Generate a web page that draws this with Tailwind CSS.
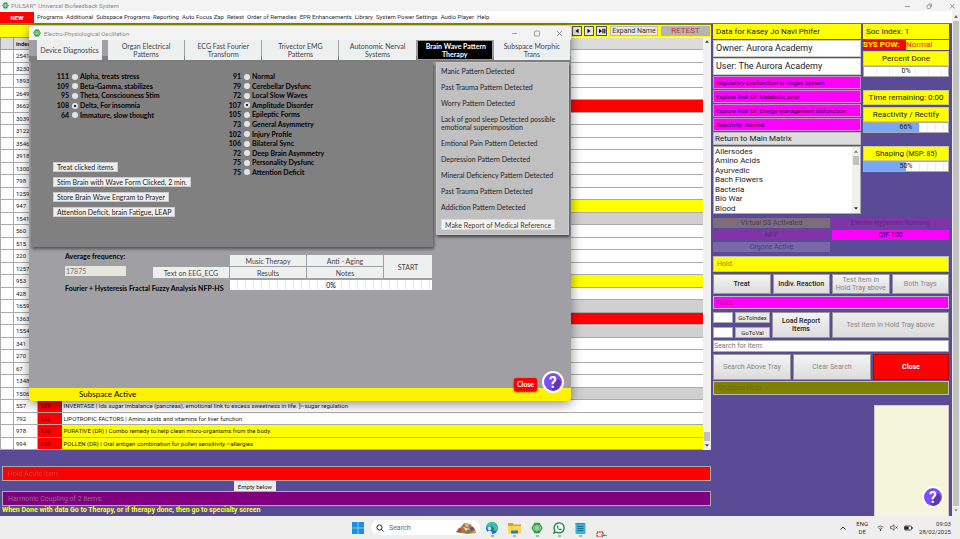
<!DOCTYPE html>
<html lang="en">
<head>
<meta charset="utf-8">
<title>PULSAR™ Universal Biofeedback System</title>
<script src="https://cdn.jsdelivr.net/npm/@tailwindcss/browser@4"></script>
</head>
<body class="min-h-screen flex flex-col bg-[#f3f3f3] font-['Roboto',sans-serif] text-[7px] leading-[9px] text-[#222] overflow-hidden">

<svg class="hidden">
  <symbol id="hex" viewBox="0 0 16 16"><path d="M4.5 1h7L15.5 8l-4 7h-7L.5 8z" fill="#2f9e44"/><path d="M5.2 4.5c-2 1-2 6 0 7M10.8 4.5c2 1 2 6 0 7M8 3.5v9M6.5 5v6M9.500 5v6" stroke="#d9f5df" stroke-width="1.100" fill="none"/></symbol>
  <symbol id="help" viewBox="0 0 24 24"><circle cx="12" cy="12" r="12" fill="#fff"/><circle cx="12" cy="12" r="9.800" fill="#7c4dff"/><path d="M16 7l4.500 4.500a9.800 9.800 0 0 1-8.500 10.300L9 18z" fill="#5e35b1"/><text x="12" y="18" text-anchor="middle" font-family="Roboto" font-weight="700" font-size="17" fill="#fff">?</text></symbol>
</svg>

<header class="flex items-center h-[11px] px-[2px] gap-[2px] text-[6px] leading-[8px] text-[#8a8a8a]">
  <svg class="size-[7px]"><use href="#hex"/></svg>
  <h1 class="flex-1">PULSAR™ Universal Biofeedback System</h1>
  <svg class="w-[54px] h-[8px]" viewBox="0 0 54 8" fill="none" stroke="#888" stroke-width=".8"><path d="M1 4.500h5M46 2l4.500 4.500M50.500 2L46 6.500"/><rect x="23" y="3" width="3.500" height="3.500" rx=".8"/><path d="M24.500 2H27.500V5"/></svg>
</header>

<div class="flex flex-1 bg-[#5a4b96]">
<div class="flex-1 min-w-0 flex flex-col">
  <nav class="flex items-center h-[13px] bg-white text-[6px] leading-[8px] border-b border-[#777]">
    <a href="#" class="w-[34px] h-[11px] leading-[11px] bg-[#f00] text-white font-bold text-center">NEW</a>
    <div class="flex gap-[3px] pl-[3px] text-[#333]">
      <a href="#">Programs</a><a href="#">Additional</a><a href="#">Subspace Programs</a><a href="#">Reporting</a><a href="#">Auto Focus Zap</a><a href="#">Retest</a><a href="#">Order of Remedies</a><a href="#">EPR Enhancements</a><a href="#">Library</a><a href="#">System Power Settings</a><a href="#">Audio Player</a><a href="#">Help</a>
    </div>
  </nav>

  <div class="flex flex-1">
    <main class="flex-1 min-w-0 flex flex-col">
      <div class="flex items-center justify-end gap-[2px] h-[13px] bg-[#ff0] border-t border-[#8a8a00] pr-[1px]">
        <button aria-label="Previous" class="w-[10px] h-[10px] bg-[#e4e4e4] border border-[#555] flex items-center justify-center"><svg viewBox="0 0 8 8" class="size-[6px]"><path d="M6 1v6L2 4z"/></svg></button>
        <button aria-label="Next" class="w-[10px] h-[10px] bg-[#e4e4e4] border border-[#555] flex items-center justify-center"><svg viewBox="0 0 8 8" class="size-[6px]"><path d="M2 1v6l4-3z"/></svg></button>
        <button aria-label="Play or pause" class="w-[11px] h-[10px] bg-[#e4e4e4] border border-[#555] flex items-center justify-center"><svg viewBox="0 0 10 8" class="w-[8px] h-[6px]"><path d="M1 1v6l4-3zM5.500 1H7v6H5.500zM8 1h1.500v6H8z"/></svg></button>
        <button class="w-[48px] h-[10px] ml-[1px] bg-[#e8e8e8] border border-[#bbb] text-[7px] leading-[8px] text-[#333] whitespace-nowrap">Expand Name</button>
        <button class="w-[49px] h-[10px] ml-[1px] bg-[#b4b4b4] text-[8px] leading-[10px] text-[#c8303c]">RETEST</button>
      </div>
      <div class="flex bg-white">
        <table class="flex-1 w-full table-fixed border-collapse text-[6px] leading-[8px]">
          <colgroup><col class="w-[13px]"><col class="w-[24px]"><col class="w-[24px]"><col></colgroup>
          <thead><tr class="h-[12px] bg-[#dcdcdc] text-left">
            <th class="p-0 border border-[#999]"></th><th class="p-0 pl-[2px] border border-[#999]">index</th><th class="p-0"></th><th class="p-0"></th></tr></thead>
          <tbody id="rows"></tbody>
        </table>
        <div class="w-[8px] bg-[#f0f0f0] flex flex-col items-center justify-between py-[3px]">
          <svg viewBox="0 0 6 4" class="w-[4px] h-[3px]"><path d="M0 4h6L3 0z" fill="#444"/></svg>
          <div class="w-full flex flex-col items-center gap-[3px]"><div class="w-[6px] h-[9px] bg-[#c0c0c0]"></div><svg viewBox="0 0 6 4" class="w-[4px] h-[3px]"><path d="M0 0h6L3 4z" fill="#444"/></svg></div>
        </div>
      </div>
      <div class="pl-[2px] pt-[16px] flex flex-col">
        <input aria-label="Hold acute item" placeholder="Hold Acute Item" class="h-[15px] w-full bg-[#f00] border border-[#aaa] px-[5px] text-[7px] placeholder:text-[#9a5a4a]">
        <button class="ml-[232px] w-[42px] h-[10px] bg-[#ececec] text-[6px] leading-[9px]">Empty below</button>
        <input aria-label="Harmonic coupling" placeholder="Harmonic Coupling of 2 items:" class="h-[15px] w-full bg-[#800080] border border-[#aaa] px-[5px] text-[7px] placeholder:text-[#8f6a8f]">
        <p class="text-[7px] leading-[9px] font-bold text-[#ffff20]">When Done with data Go to Therapy, or if therapy done, then go to specialty screen</p>
      </div>
    </main>

    <aside class="w-[241px] pl-[2px] pr-[3px] flex flex-col text-[7px] leading-[9px]">
      <div class="grid grid-cols-[148px_1fr] gap-x-[2px]">
        <div class="flex flex-col">
          <p class="h-[15px] px-[3px] bg-[#ff0] text-[8px] leading-[15px]">Data for Kasey Jo Navi Phifer</p>
          <p class="h-[17px] mt-px px-[2px] bg-white border border-[#ccc] text-[9px] leading-[15px]">Owner: Aurora Academy</p>
          <p class="h-[17px] mt-px px-[2px] bg-white border border-[#ccc] text-[9px] leading-[15px]">User: The Aurora Academy</p>
          <div class="mt-px grid gap-px text-[6px] leading-[11px] text-[#400040]">
            <p class="h-[13px] px-[2px] bg-[#f0f] border border-[#c8c]">Regulatory Dysfunction in: Organ System</p>
            <p class="h-[13px] px-[2px] bg-[#f0f] border border-[#c8c]">Explore Risk Of: Metabolic error</p>
            <p class="h-[13px] px-[2px] bg-[#f0f] border border-[#c8c]">Explore Risk Of: Energy management disfunction</p>
            <p class="h-[13px] px-[2px] bg-[#f0f] border border-[#c8c]">Reactivity: Normal</p>
          </div>
          <button class="h-[13px] mt-px px-[1px] bg-[#dcdcdc] border border-[#bbb] text-left text-[8px] leading-[11px]">Return to Main Matrix</button>
          <div class="h-[68px] mt-px bg-white border border-[#aaa] flex text-[8px] overflow-hidden">
            <ul class="flex-1 pl-[1px] grid auto-rows-fr leading-[10px]"><li>Allersodes</li><li>Amino Acids</li><li>Ayurvedic</li><li>Bach Flowers</li><li>Bacteria</li><li>Bio War</li><li>Blood</li></ul>
            <div class="w-[8px] bg-[#f0f0f0] flex flex-col items-center py-[3px]"><svg viewBox="0 0 6 4" class="w-[4px] h-[3px]"><path d="M0 4h6L3 0z" fill="#777"/></svg><div class="w-[6px] h-[9px] mt-[3px] bg-[#c0c0c0]"></div><svg viewBox="0 0 6 4" class="mt-auto w-[4px] h-[3px]"><path d="M0 0h6L3 4z" fill="#333"/></svg></div>
          </div>
        </div>
        <div class="flex flex-col text-center text-[8px]">
          <p class="h-[15px] px-[3px] bg-[#ff0] text-left leading-[15px]">Soc Index: 1</p>
          <p class="h-[10px] mt-px flex text-left text-[8px] leading-[10px]"><b class="w-[43px] bg-[#f00] text-[#ff0]">SYS POW:</b><span class="flex-1 bg-[#ff0] text-[#f02020]">Normal</span></p>
          <p class="h-[15px] mt-px bg-[#ff0] border border-[#cc8] leading-[13px]">Percent Done</p>
          <div class="h-[11px] bg-white border border-[#aaa] text-[7px] leading-[9px] bg-[repeating-linear-gradient(90deg,#fff_0_12px,#eee_12px_13px)]">0%</div>
          <p class="h-[15px] mt-[13px] bg-[#ff0] border border-[#cc8] leading-[13px]">Time remaining: 0:00</p>
          <p class="h-[15px] mt-[2px] bg-[#ff0] border border-[#cc8] leading-[13px]">Reactivity / Rectify</p>
          <div class="h-[11px] bg-white border border-[#aaa] text-[7px] leading-[9px] bg-[linear-gradient(90deg,#78a8f4_0_66%,transparent_66%),repeating-linear-gradient(90deg,#fff_0_7px,#eee_7px_8px)]">66%</div>
          <p class="h-[15px] mt-[13px] bg-[#ff0] border border-[#cc8] leading-[13px]">Shaping <span class="text-[7px]">(MSP: 85)</span></p>
          <div class="h-[11px] bg-white border border-[#aaa] text-[7px] leading-[9px] bg-[linear-gradient(90deg,#78a8f4_0_50%,transparent_50%),repeating-linear-gradient(90deg,#fff_0_7px,#eee_7px_8px)]">50%</div>
        </div>
      </div>

      <div class="mt-[4px] grid grid-cols-2 gap-[2px] text-center leading-[10px]">
        <button class="h-[10px] bg-[#7c6c7c] text-[#483c60]">Virtual SS Activated</button><button class="h-[10px] bg-[#8034a8] text-[#563080]">Electro Hypnosis Running</button>
        <button class="h-[10px] bg-[#8034a8] text-[#563080]">NFP</button><button class="h-[10px] bg-[#f0f] text-[#303]">QIF 100</button>
        <button class="h-[10px] bg-[#7868a8] text-[#4a3d78]">Orgone Active</button>
      </div>

      <input aria-label="Hold" placeholder="Hold:" class="mt-[4px] h-[16px] w-full px-[3px] bg-[#ff0] border border-[#bbb] text-[7px] placeholder:text-[#88882a]">
      <div class="mt-[2px] grid grid-cols-4 gap-[2px] text-[7px] leading-[8px] *:h-[20px] *:border *:border-[#999] *:bg-linear-to-b *:from-[#f4f4f4] *:to-[#dcdcdc]">
        <button class="font-medium">Treat</button><button class="font-medium">Indiv. Reaction</button><button class="text-[#888]">Test Item in<br>Hold Tray above</button><button class="text-[#888]">Both Trays</button>
      </div>
      <input aria-label="Second hold" placeholder="Hold:" class="mt-[2px] h-[13px] w-full px-[3px] bg-[#f0f] border border-[#bbb] text-[7px] placeholder:text-[#a020a0]">
      <div class="mt-[3px] grid grid-cols-[20px_35px_58px_1fr] gap-x-[2px] gap-y-[4px]">
        <input aria-label="Index" class="h-[11px] min-w-0 bg-white border border-[#aaa]">
        <button class="h-[11px] bg-[#e8e8e8] border border-[#aaa] text-[6px] leading-[9px]">GoToIndex</button>
        <button class="row-span-2 border border-[#999] bg-linear-to-b from-[#f4f4f4] to-[#dcdcdc] font-medium leading-[8px] px-[6px]">Load Report Items</button>
        <button class="row-span-2 border border-[#999] bg-linear-to-b from-[#ececec] to-[#dcdcdc] text-[#888] leading-[8px]">Test Item in Hold Tray above</button>
        <input aria-label="Value" class="h-[11px] min-w-0 bg-white border border-[#aaa]">
        <button class="h-[11px] bg-[#e8e8e8] border border-[#aaa] text-[6px] leading-[9px]">GoToVal</button>
      </div>
      <input aria-label="Search for item" placeholder="Search for item:" class="mt-[2px] h-[12px] w-full bg-white border border-[#aaa] text-[7px] placeholder:text-[#777]">
      <div class="mt-[2px] grid grid-cols-[78px_78px_1fr] gap-[2px] *:h-[26px] *:border">
        <button class="border-[#999] bg-linear-to-b from-[#f4f4f4] to-[#dcdcdc] text-[#888]">Search Above Tray</button>
        <button class="border-[#999] bg-linear-to-b from-[#f4f4f4] to-[#dcdcdc] text-[#888]">Clear Search</button>
        <button class="border-[#b00] bg-[#f00] text-white font-bold">Close</button>
      </div>
      <input aria-label="Situation hold" placeholder="Situation Hold:" class="mt-[1px] h-[14px] w-full px-[3px] bg-[#808000] border border-[#bbb] text-[7px] placeholder:text-[#6a6a20]">
      <div class="mt-[10px] flex-1 w-[75px] ml-auto bg-[#f5f5dc] border border-b-0 border-[#ccc] flex items-end justify-end px-[4px] pb-[8px]">
        <button aria-label="Help"><svg class="size-[22px]"><use href="#help"/></svg></button>
      </div>
    </aside>
  </div>
</div>
<div class="w-[8px] bg-[#f0f0f0] flex flex-col items-center justify-between py-[4px]">
  <svg viewBox="0 0 6 4" class="w-[4px] h-[3px]"><path d="M0 4h6L3 0z" fill="#555"/></svg>
  <div class="flex-1 w-[6px] my-[3px] bg-[#c1c1c1]"></div>
  <svg viewBox="0 0 6 4" class="w-[4px] h-[3px]"><path d="M0 0h6L3 4z" fill="#999"/></svg>
</div>
</div>

<section role="dialog" aria-label="Electro-Physiological Oscillation" class="absolute left-[29px] top-[26px] w-[542px] flex flex-col rounded-[3px] overflow-hidden bg-[#a09fa4] shadow-[0_3px_12px_rgba(0,0,0,.45)] font-['Lato',sans-serif] text-black">
  <div class="h-[14px] pl-[4px] pr-[6px] flex items-center gap-[3px] bg-[#f3f3f3] text-[#8a8a8a] text-[6px] font-['Roboto',sans-serif]">
    <svg class="size-[8px]"><use href="#hex"/></svg><h2 class="flex-1">Electro-Physiological Oscillation</h2>
    <svg class="w-[54px] h-[8px]" viewBox="0 0 54 8" fill="none" stroke="#888" stroke-width=".8"><path d="M1 4.500h5M46 2l5 5M51 2l-5 5"/><rect x="23.500" y="2" width="5" height="5" rx=".5"/></svg>
  </div>
  <div class="flex h-[22px] bg-linear-to-b from-[#a09fa4] from-75% to-[#808080] to-75% pl-[8px] pr-px text-[7px] leading-[8px] text-[#444]">
    <button class="w-[65px] h-[20px] mr-[6px] bg-[#eef0f0]">Device Diagnostics</button>
    <div class="flex-1 grid grid-cols-6 gap-px *:h-[20px] *:px-[8px]">
      <button class="bg-[#eef0f0]">Organ Electrical Patterns</button><button class="bg-[#eef0f0]">ECG Fast Fourier Transform</button><button class="bg-[#eef0f0]">Trivector EMG Patterns</button><button class="bg-[#eef0f0]">Autonomic Nerval Systems</button><button class="bg-black text-white font-bold border border-[#999] whitespace-nowrap">Brain Wave Pattern<br>Therapy</button><button class="bg-[#eef0f0]">Subspace Morphic Trans</button>
    </div>
  </div>
  <div class="flex gap-[3px] items-start pl-[2px] pr-[2px]">
    <div class="flex-1 h-[185px] bg-[#808080] shadow-[1px_2px_3px_rgba(0,0,0,.5)] flex items-start pl-[22px] pt-[10px]">
      <div class="w-[172px] flex flex-col">
        <div role="radiogroup" aria-label="Brain waves" id="waves" class="h-[48px] shrink-0 grid auto-rows-fr text-[7px] leading-[9px] font-bold"></div>
        <div class="mt-[42px] flex flex-col items-start gap-[5px] text-[7px] leading-[8px] *:h-[10px] *:px-[3px] *:bg-[#eee] *:text-[#222] *:border *:border-[#ccc]">
          <button>Treat clicked items</button><button>Stim Brain with Wave Form Clicked, 2 min.</button><button>Store Brain Wave Engram to Prayer</button><button>Attention Deficit, brain Fatigue, LEAP</button>
        </div>
      </div>
      <div role="radiogroup" aria-label="Wave forms" id="forms" class="h-[105px] grid auto-rows-fr text-[7px] leading-[9px] font-bold"></div>
    </div>
    <div class="w-[133px] h-[173px] bg-[#c0c0c0] border border-[#ccc] shadow-[1px_2px_3px_rgba(0,0,0,.6)] pl-[4px] pt-[4px] text-[7px] leading-[8px] text-[#222] flex flex-col gap-[8px] items-start">
      <p>Manic Pattern Detected</p><p>Past Trauma Pattern Detected</p><p>Worry Pattern Detected</p><p>Lack of good sleep Detected possible emotional superimposition</p><p>Emtional Pain Pattern Detected</p><p>Depression Pattern Detected</p><p>Mineral Deficiency Pattern Detected</p><p>Past Trauma Pattern Detected</p><p>Addiction Pattern Detected</p>
      <button class="h-[11px] px-[3px] bg-[#f2f2f2] border border-[#ddd] text-[#444]">Make Report of Medical Reference</button>
    </div>
  </div>
  <div class="flex pl-[36px] pr-[139px] pt-[5px] pb-[96px] text-[7px] leading-[8px]">
    <div class="flex-1 min-w-0 flex flex-col">
      <label for="freq" class="font-bold h-[14px]">Average frequency:</label>
      <input id="freq" value="17875" class="w-[61px] h-[10px] px-[1px] bg-[#e6e6dc] text-[#777] text-[7px]">
      <p class="mt-[8px] font-bold whitespace-nowrap">Fourier + Hysteresis Fractal Fuzzy Analysis NFP-HS</p>
    </div>
    <button class="self-start shrink-0 w-[76px] h-[11px] mt-[15px] mr-px bg-[#eef0f0] text-[#444]">Text on EEG_ECG</button>
    <div class="w-[202px] shrink-0 mt-[3px]">
      <div class="grid grid-cols-[76px_76px_1fr] gap-px text-[#444] *:bg-[#eef0f0]">
        <button class="h-[11px]">Music Therapy</button><button>Anti - Aging</button><button class="row-span-2">START</button>
        <button class="h-[11px]">Results</button><button>Notes</button>
      </div>
      <div class="mt-[2px] h-[10px] text-center leading-[10px] bg-[repeating-linear-gradient(90deg,#fff_0_7px,#eaeaea_7px_8px)]">0%</div>
    </div>
  </div>
  <div class="h-[13px] pl-[50px] bg-[#fff200] text-[8px] leading-[13px]">Subspace Active</div>
  <div class="absolute right-[7px] bottom-[8px] flex items-center gap-[5px]">
    <button class="w-[23px] h-[13px] mt-[4px] rounded-[2px] bg-[#f00] shadow-[0_1px_2px_#333] text-white font-bold text-[7px]">Close</button>
    <button aria-label="Help"><svg class="size-[22px]"><use href="#help"/></svg></button>
  </div>
</section>

<footer class="grid grid-cols-[1fr_auto_1fr] items-center h-[23px] bg-[#eee] text-[6px] leading-[8px]">
  <div></div>
  <div class="flex items-center w-[256px] gap-[10px]">
    <button aria-label="Start"><svg class="size-[12px]" viewBox="0 0 12 12" fill="#1b8fe0"><path d="M0 0h5.700v5.700H0zM6.300 0H12v5.700H6.300zM0 6.300h5.700V12H0zM6.300 6.300H12V12H6.300z"/></svg></button>
    <label class="flex items-center w-[109px] h-[15px] rounded-full bg-white pl-[5px] pr-[3px] gap-[5px] -ml-[3px]">
      <svg class="size-[8px] shrink-0" viewBox="0 0 8 8" fill="none" stroke="#222"><circle cx="3.500" cy="3.500" r="2.600"/><path d="M5.500 5.500l2 2"/></svg>
      <input aria-label="Search" placeholder="Search" class="flex-1 min-w-0 text-[7px] placeholder:text-[#666]">
      <svg class="w-[22px] h-[12px] shrink-0" viewBox="0 0 22 12"><path d="M1 10q2-4 5-5l3-4 6 1 5 5 1 4-9 1z" fill="#a8794f"/><circle cx="5" cy="8" r="2" fill="#c94a3c"/><circle cx="12" cy="3" r="2" fill="#d9b48a"/><path d="M8 5l4 5 3-3z" fill="#f0d9c0"/><circle cx="17" cy="7" r="2" fill="#6a4a78"/><circle cx="13" cy="9" r="1.600" fill="#5f8a3a"/><circle cx="19" cy="10" r="1.400" fill="#d8a030"/><path d="M1 10l3-2 2 3z" fill="#4f7a3a"/></svg>
    </label>
    <div class="flex gap-[10px] -ml-[4px] pt-[3px]">
      <button aria-label="Edge"><svg class="w-[12px] h-[15px]" viewBox="0 0 12 15"><circle cx="6" cy="6" r="6" fill="#1474c4"/><path d="M0 6a6 6 0 0 1 12 0q0 3-3.500 2.800Q6.500 8.500 8 6.500 7 4 4.500 4.500 1.500 5 0 6z" fill="#3cc98a"/><path d="M0 6Q1 2 6 2q4 .5 4 4-1-2-4-2Q2 4 0 6z" fill="#32b5d8"/><circle cx="3.500" cy="6.500" r="1.800" fill="#ddd"/><path d="M1 12q0-3.500 2.500-3.500T6 12z" fill="#eee"/><path d="M5 14h3" stroke="#777"/></svg></button>
      <button aria-label="Files"><svg class="w-[13px] h-[15px]" viewBox="0 0 13 15"><path d="M0 1h5l1 1.500h7V11H0z" fill="#e0a020"/><path d="M0 4h13v7.500H0z" fill="#ffd75a"/><path d="M3 8.500h7v3H3z" fill="#1f80d0"/><path d="M5 14h3" stroke="#777"/></svg></button>
      <button aria-label="PULSAR"><svg class="w-[12px] h-[15px]" viewBox="0 0 12 15"><svg width="12" height="12"><use href="#hex"/></svg><path d="M5 14h3" stroke="#777"/></svg></button>
      <button aria-label="WhatsApp"><svg class="w-[12px] h-[15px]" viewBox="0 0 12 15"><path d="M1 11l.8-2.600A5 5 0 1 1 3.600 10.200z" fill="#fff" stroke="#178a50" stroke-width="1.400"/><path d="M4 3.500q-.8 1 .6 2.900T8 8.300q1-.4.8-1.200L7.500 6.500l-.6.700Q5.600 6.600 5.100 5.300l.5-.6L5 3.400z" fill="#178a50"/><path d="M5 14h3" stroke="#777"/></svg></button>
      <button aria-label="Notepad"><svg class="w-[11px] h-[15px]" viewBox="0 0 11 15"><rect x=".5" y="1" width="10" height="11" rx="1" fill="#35b4dc"/><path d="M.5 1.500h10" stroke="#555" stroke-dasharray="1 1"/><path d="M2.500 4.500h6M2.500 6.500h6M2.500 8.500h6" stroke="#17607c" stroke-width=".8"/><path d="M4 14h3" stroke="#777"/></svg></button>
      <svg class="w-[12px] h-[6px] self-end" viewBox="0 0 12 6"><rect x="1" y="1" width="6" height="5" fill="none" stroke="#e03a20" stroke-width="1.400" stroke-dasharray="1.500 .7"/><path d="M5 4h4l2 1" stroke="#48a0d8"/></svg>
    </div>
  </div>
  <div class="flex items-center justify-end gap-[6px] pr-[9px] text-center text-[#333]">
    <svg class="w-[6px] h-[4px] mr-[4px]" viewBox="0 0 6 4" fill="none" stroke="#333"><path d="M.5 3.500L3 1l2.500 2.500"/></svg>
    <span class="mr-[3px]">ENG<br>DE</span>
    <svg class="w-[7px] h-[6px]" viewBox="0 0 7 6" fill="none" stroke="#777"><path d="M.5 2.200q3-2.400 6 0M1.700 3.700q1.800-1.400 3.600 0"/><circle cx="3.500" cy="5" r=".5" fill="#333" stroke="#333"/></svg>
    <svg class="w-[8px] h-[7px]" viewBox="0 0 8 7" fill="none" stroke="#333" stroke-width=".7"><path d="M.5 2.500h1.300L4 .7v5.600L1.800 4.500H.5zM5.500 2.500l2 2M7.500 2.500l-2 2"/></svg>
    <svg class="w-[9px] h-[6px]" viewBox="0 0 9 6"><rect x=".5" y="1" width="7" height="4" rx="1" fill="none" stroke="#222" stroke-width=".8"/><path d="M1 1.500h3.500v3H1zM8 2.200h.8v1.600H8z" fill="#222"/></svg>
    <time class="text-right">09:03<br>28/02/2025</time>
  </div>
</footer>

<script>
const W = 'bg-white', R = 'bg-[#f00]', Y = 'bg-[#ff0]', G = 'bg-[#d0d0d0]';
const rows = [[2541,W],[3230,W],[1893,W],[2649,W],[3662,R],[3039,W],[3122,W],[3546,W],[3918,W],[1300,W],[798,W],[1259,W],[947,Y],[1541,G],[560,W],[515,W],[220,W],[1257,W],[953,Y],[428,W],[1659,G],[1363,R],[1554,G],[341,W],[270,W],[67,W],[1348,W],[1506,G],
[557,W,131,'INVERTASE | Ids sugar imbalance (pancreas), emotional link to excess sweetness in life. ]~sugar regulation'],
[792,W,133,'LIPOTROPIC FACTORS | Amino acids and vitamins for liver function.'],
[978,Y,136,'PURATIVE (DR) | Combo remedy to help clean micro-organisms from the body.'],
[994,Y,138,'POLLEN (DR) | Oral antigen combination for pollen sensitivity.~allergies']];
document.getElementById('rows').innerHTML = rows.map(([n, c, v = '', t = ''], i) =>
  `<tr class="${i % 2 ? 'h-[12px]' : 'h-[13px]'}"><td class="p-0 bg-white border border-[#aaa]"></td><td class="p-0 pl-[2px] bg-white border border-[#aaa]">${n}</td><td class="p-0 pl-[2px] bg-[#f00] text-[#500] border-y border-[#aaa]">${v}</td><td class="p-0 pl-[2px] whitespace-nowrap border-y border-[#aaa] ${c}">${t}</td></tr>`).join('');
const radios = (id, items, on) => document.getElementById(id).innerHTML = items.map(([n, t], i) =>
  `<label class="flex items-center"><span class="w-[16px] text-right">${n}</span><input type="radio" name="${id}" ${i === on ? 'checked' : ''} class="appearance-none size-[6px] ml-[3px] mr-[2px] rounded-full bg-[#e4e4e4] checked:bg-[radial-gradient(circle,#222_0_1px,#e4e4e4_1.500px)]">${t}</label>`).join('');
radios('waves', [[111,'Alpha, treats stress'],[109,'Beta-Gamma, stabilizes'],[95,'Theta, Consciouness Stim'],[108,'Delta, For insomnia'],[64,'Immature, slow thought']], 3);
radios('forms', [[91,'Normal'],[79,'Cerebellar Dysfunc'],[72,'Local Slow Waves'],[107,'Amplitude Disorder'],[105,'Epileptic Forms'],[73,'General Asymmetry'],[102,'Injury Profile'],[106,'Bilateral Sync'],[72,'Deep Brain Asymmetry'],[75,'Personality Dysfunc'],[75,'Attention Deficit']], 3);
</script>
</body>
</html>
